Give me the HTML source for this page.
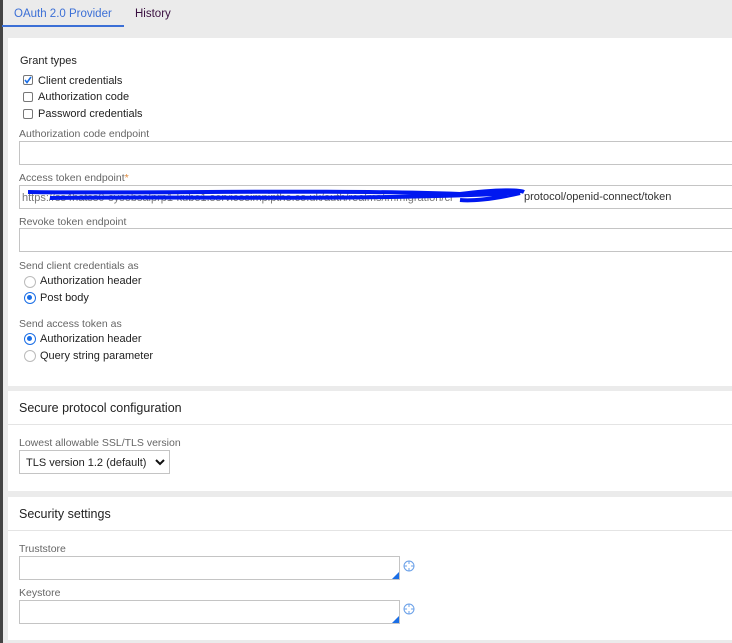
<!DOCTYPE html>
<html><head><style>
*{box-sizing:border-box;margin:0;padding:0}
body{width:732px;height:643px;background:#ebebeb;font-family:"Liberation Sans",sans-serif;font-size:11px;color:#222;position:relative;overflow:hidden}
.a{position:absolute;white-space:nowrap}
.lb{color:#666;font-size:10.5px}
.in{position:absolute;background:#fff;border:1px solid #c4c4c4}
.p{position:absolute;left:8px;right:0;background:#fff}
.cb{position:absolute;width:10px;height:10px;border:1px solid #777;border-radius:2px;background:#fff}
.rd{position:absolute;width:12px;height:12px;border:1px solid #bbb;border-radius:50%;background:#fff}
.rd.on{border:1.5px solid #1a6ee6}
.rd.on::after{content:"";position:absolute;left:2px;top:2px;width:5px;height:5px;border-radius:50%;background:#1a6ee6}
.h{font-size:12.5px;color:#222}
.tri{position:absolute;right:0;bottom:0;width:0;height:0;border-left:7px solid transparent;border-bottom:7px solid #1a6ee6}
</style></head><body>
<div style="position:absolute;left:0;top:0;width:3px;height:643px;background:#444"></div>
<div class="a" style="left:14px;top:8px;color:#3b6fd6;font-size:11.5px">OAuth 2.0 Provider</div>
<div class="a" style="left:135px;top:8px;color:#3a1040;font-size:11.5px">History</div>
<div class="a" style="left:2px;top:25px;width:122px;height:2px;background:#3b6fd6"></div>

<div class="p" style="top:38px;height:348px"></div>
<div class="a" style="left:20px;top:55px">Grant types</div>
<div class="cb" style="left:23px;top:75px"></div>
<svg class="a" style="left:24px;top:76px" width="8" height="8"><path d="M1 4 L3 6.5 L7 1" stroke="#1a6ee6" stroke-width="1.6" fill="none"/></svg>
<div class="a" style="left:38px;top:75px">Client credentials</div>
<div class="cb" style="left:23px;top:92px"></div>
<div class="a" style="left:38px;top:91px">Authorization code</div>
<div class="cb" style="left:23px;top:109px"></div>
<div class="a" style="left:38px;top:108px">Password credentials</div>

<div class="a lb" style="left:19px;top:128px">Authorization code endpoint</div>
<div class="in" style="left:19px;top:141px;width:720px;height:24px"></div>
<div class="a lb" style="left:19px;top:172px">Access token endpoint<span style="color:#e08a3c">*</span></div>
<div class="in" style="left:19px;top:185px;width:720px;height:24px"></div>
<svg class="a" style="left:20px;top:186px" width="506" height="22"><text x="2" y="15" font-size="11" fill="#777" font-family="Liberation Sans">https://ss4hatss0-sysebsalprp1-kube1.servicesimpipthe.co.uk/auth/realms/immigration/cl</text><path d="M8 6 C120 8 300 3 440 8 C480 3 500 4 504 6 M30 12 C180 10 330 15 500 7 C470 14 450 15 440 14" stroke="#0018f0" stroke-width="4" fill="none"/></svg>
<div class="a" style="left:524px;top:191px;color:#333">protocol/openid-connect/token</div>
<div class="a lb" style="left:19px;top:216px">Revoke token endpoint</div>
<div class="in" style="left:19px;top:228px;width:720px;height:24px"></div>

<div class="a lb" style="left:19px;top:260px">Send client credentials as</div>
<div class="rd" style="left:24px;top:276px"></div>
<div class="a" style="left:40px;top:275px">Authorization header</div>
<div class="rd on" style="left:24px;top:292px"></div>
<div class="a" style="left:40px;top:292px">Post body</div>
<div class="a lb" style="left:19px;top:318px">Send access token as</div>
<div class="rd on" style="left:24px;top:333px"></div>
<div class="a" style="left:40px;top:333px">Authorization header</div>
<div class="rd" style="left:24px;top:350px"></div>
<div class="a" style="left:40px;top:350px">Query string parameter</div>

<div class="p" style="top:391px;height:100px"></div>
<div class="a h" style="left:19px;top:401px">Secure protocol configuration</div>
<div class="a" style="left:8px;right:0;top:424px;height:1px;background:#e4e4e4"></div>
<div class="a lb" style="left:19px;top:437px">Lowest allowable SSL/TLS version</div>
<div class="in" style="left:19px;top:450px;width:151px;height:24px"></div>
<div class="a" style="left:26px;top:457px">TLS version 1.2 (default)</div>
<svg class="a" style="left:155px;top:458px" width="10" height="8"><path d="M1 2 L5 6 L9 2" stroke="#111" stroke-width="2" fill="none"/></svg>

<div class="p" style="top:497px;height:143px"></div>
<div class="a h" style="left:19px;top:507px">Security settings</div>
<div class="a" style="left:8px;right:0;top:530px;height:1px;background:#e4e4e4"></div>
<div class="a lb" style="left:19px;top:543px">Truststore</div>
<div class="in" style="left:19px;top:556px;width:381px;height:24px"><div class="tri"></div></div>
<svg class="a" style="left:403px;top:560px" width="12" height="12"><circle cx="6" cy="6" r="5" stroke="#6aa0e8" fill="none"/><path d="M6 1v3M6 8v3M1 6h3M8 6h3" stroke="#6aa0e8"/></svg>
<div class="a lb" style="left:19px;top:587px">Keystore</div>
<div class="in" style="left:19px;top:600px;width:381px;height:24px"><div class="tri"></div></div>
<svg class="a" style="left:403px;top:603px" width="12" height="12"><circle cx="6" cy="6" r="5" stroke="#6aa0e8" fill="none"/><path d="M6 1v3M6 8v3M1 6h3M8 6h3" stroke="#6aa0e8"/></svg>
</body></html>
